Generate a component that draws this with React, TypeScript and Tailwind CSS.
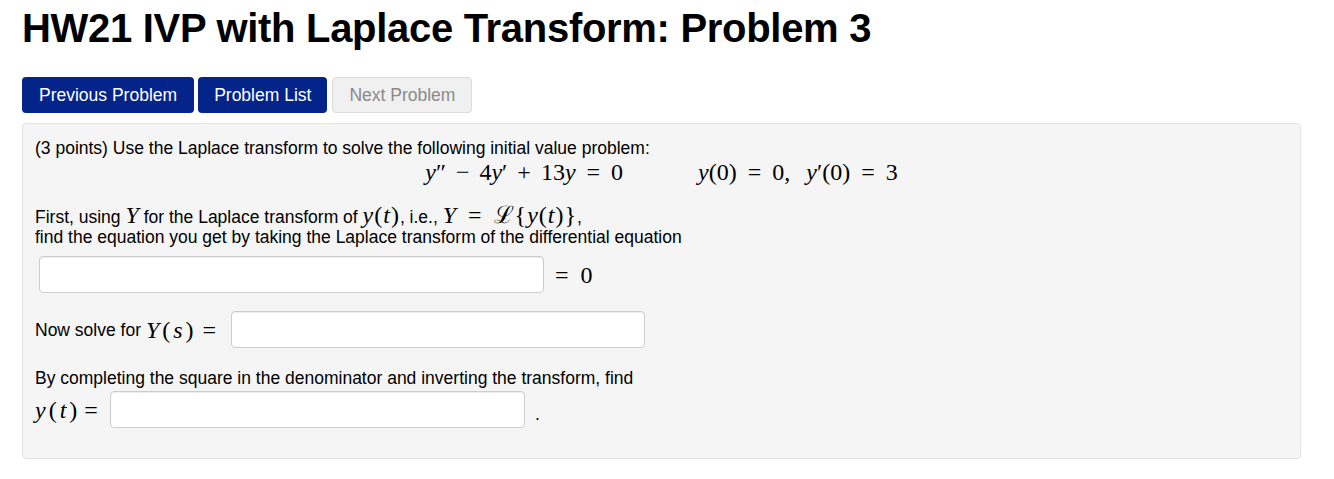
const serif = "font-['Liberation_Serif','DejaVu_Serif',serif]"

function V({ children }: { children: React.ReactNode }) {
  return <span className="italic">{children}</span>
}

// relation / binary operator with TeX-like spacing
function Rel({ children }: { children: React.ReactNode }) {
  return <span className="mx-[11px]">{children}</span>
}
function Bin({ children }: { children: React.ReactNode }) {
  return <span className="mx-[10px]">{children}</span>
}

function Field({ w }: { w: string }) {
  return (
    <span
      className={`inline-block h-[37px] ${w} rounded-[4px] border border-[#cccccc] bg-white align-middle shadow-[inset_0_1px_1px_rgba(0,0,0,0.075)]`}
    />
  )
}

export default function App() {
  return (
    <div className="min-h-screen bg-white pl-[22px] pr-[33px] font-['Liberation_Sans',Arial,sans-serif] text-[#222]">
      <h1 className="text-[40px] leading-[56px] font-bold tracking-[-0.3px] text-black">
        HW21 IVP with Laplace Transform: Problem 3
      </h1>

      <div className="mt-[21px] flex gap-[4px] text-[17.5px]">
        <button className="h-[36px] rounded-[4px] bg-[#04248a] px-[17px] text-white">Previous Problem</button>
        <button className="h-[36px] rounded-[4px] bg-[#04248a] px-[16px] text-white">Problem List</button>
        <button className="ml-[1px] h-[36px] rounded-[4px] border border-[#dcdcdc] bg-[#f0f0f0] px-4 text-[#8a8a8a]">
          Next Problem
        </button>
      </div>

      <div className="mt-[10px] h-[336px] rounded-[4px] border border-[#e3e3e3] bg-[#f5f5f5] px-3 pt-[13px] text-[17.5px] leading-[22px] text-black">
        <p>(3 points) Use the Laplace transform to solve the following initial value problem:</p>
        <div className={`flex justify-center gap-[75px] text-[24px] leading-[26px] ${serif}`}>
          <span>
            <V>y</V>″<Bin>−</Bin>4<V>y</V>′<Bin>+</Bin>13<V>y</V>
            <Rel>=</Rel>0
          </span>
          <span>
            <V>y</V>(0)<Rel>=</Rel>0,<span className="ml-[16px]" />
            <V>y</V>′(0)<Rel>=</Rel>3
          </span>
        </div>

        <p className="mt-[20px] leading-[20px]">
          First, using <span className={`text-[24px] ${serif}`}><V>Y</V></span> for the Laplace transform of{' '}
          <span className={`text-[24px] tracking-[1px] ${serif}`}>
            <V>y</V>(<V>t</V>)
          </span>
          , i.e.,{' '}
          <span className={`text-[24px] tracking-[1px] ${serif}`}>
            <V>Y</V>
            <Rel>=</Rel>ℒ{'{'}<V>y</V>(<V>t</V>){'}'}
          </span>
          ,
        </p>
        <p className="leading-[20px]">find the equation you get by taking the Laplace transform of the differential equation</p>
        <div className="mt-[9px] flex items-center pl-[4px]">
          <Field w="w-[505px]" />
          <span className={`ml-[11px] text-[24px] ${serif}`}>
            <span className="mr-[12px]">=</span>0
          </span>
        </div>

        <div className="mt-[18px] flex items-center">
          <span>Now solve for&nbsp;</span>
          <span className={`text-[24px] tracking-[3px] ${serif}`}>
            <V>Y</V>(<V>s</V>)<span className="ml-[6px]">=</span>
          </span>
          <span className="ml-[12px]">
            <Field w="w-[414px]" />
          </span>
        </div>

        <p className="mt-[20px] leading-[20px]">
          By completing the square in the denominator and inverting the transform, find
        </p>
        <div className="mt-[3px] flex items-center">
          <span className={`text-[24px] tracking-[3px] ${serif}`}>
            <V>y</V>(<V>t</V>)<span className="ml-[4px]">=</span>
          </span>
          <span className="ml-[9px]">
            <Field w="w-[415px]" />
          </span>
          <span className="ml-[10px] mt-[8px]">.</span>
        </div>
      </div>
    </div>
  )
}
